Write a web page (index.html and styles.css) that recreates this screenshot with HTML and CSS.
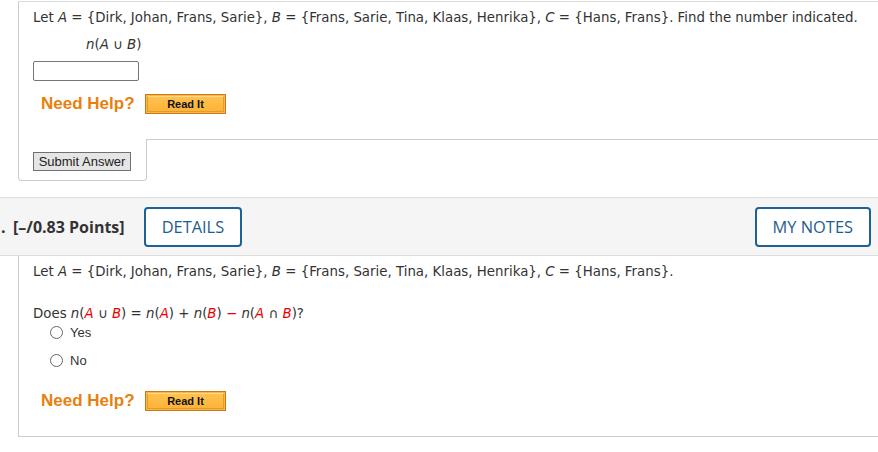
FILE: index.html
```html
<!DOCTYPE html>
<html>
<head>
<meta charset="utf-8">
<link rel="stylesheet" href="styles.css">
</head>
<body>
<div class="q1">
  <div class="card-body">
    <p class="stem">Let <i>A</i> = {Dirk, Johan, Frans, Sarie}, <i>B</i> = {Frans, Sarie, Tina, Klaas, Henrika}, <i>C</i> = {Hans, Frans}. Find the number indicated.</p>
    <p class="expr"><i>n</i>(<i>A</i> &cup; <i>B</i>)</p>
    <div class="answer"></div>
    <div class="help">
      <span class="need">Need Help?</span>
      <span class="readit"><span class="readit-in">Read It</span></span>
    </div>
  </div>
  <div class="submit-row">
    <div class="tab"><span class="submit">Submit Answer</span></div>
    <div class="tab-rest"></div>
  </div>
</div>

<div class="qhead">
  <span class="qnum">.</span>
  <span class="points">[&ndash;/0.83 Points]</span>
  <span class="btn">DETAILS</span>
  <span class="spacer"></span>
  <span class="btn notes">MY NOTES</span>
</div>

<div class="q2">
  <p class="stem">Let <i>A</i> = {Dirk, Johan, Frans, Sarie}, <i>B</i> = {Frans, Sarie, Tina, Klaas, Henrika}, <i>C</i> = {Hans, Frans}.</p>
  <p class="does">Does <i>n</i>(<i class="r">A</i> &cup; <i class="r">B</i>) = <i>n</i>(<i class="r">A</i>) + <i>n</i>(<i class="r">B</i>) <span class="r">&minus;</span> <i>n</i>(<i class="r">A</i> &cap; <i class="r">B</i>)?</p>
  <div class="opts">
    <div class="opt"><span class="radio"></span><span class="lbl">Yes</span></div>
    <div class="opt"><span class="radio"></span><span class="lbl">No</span></div>
  </div>
  <div class="help help2">
    <span class="need">Need Help?</span>
    <span class="readit"><span class="readit-in">Read It</span></span>
  </div>
</div>
</body>
</html>
```
FILE: styles.css
```css
html, body {
  margin: 0;
  padding: 0;
  background: #fff;
  overflow: hidden;
  width: 878px;
  height: 452px;
}
body {
  font-family: "DejaVu Sans", Verdana, sans-serif;
  font-size: 13.35px;
  color: #333;
}
p { margin: 0; }
i { font-style: italic; }
.r { color: #e00; }

.q1 {
  margin-top: 1px;
  margin-left: 18px;
}
.card-body {
  border-top: 1px solid #ddd;
  border-left: 1px solid #ccc;
  height: 138px;
  box-sizing: border-box;
  padding: 8px 0 0 14px;
}
.stem {
  line-height: 16px;
  white-space: nowrap;
}
.expr {
  margin-top: 11px;
  margin-left: 53px;
  line-height: 16px;
}
.answer {
  margin-top: 8px;
  width: 106px;
  height: 20px;
  box-sizing: border-box;
  border: 1px solid #767676;
  border-radius: 2px;
}
.help {
  display: flex;
  align-items: center;
  margin-top: 13px;
  margin-left: 8px;
}
.need {
  font-family: "Liberation Sans", Arial, sans-serif;
  font-weight: bold;
  font-size: 17px;
  color: #e8800d;
  width: 104px;
}
.readit {
  display: inline-block;
  width: 81px;
  height: 20px;
  box-sizing: border-box;
  border: 1px solid #c7791b;
  background: #fdb53c;
  padding: 1px;
}
.readit-in {
  display: block;
  height: 16px;
  border: 1px solid #e49a2d;
  border-top-color: #ffd98c;
  background: linear-gradient(#ffc14f, #fdb43a);
  box-sizing: border-box;
  font-family: "Liberation Sans", Arial, sans-serif;
  font-weight: bold;
  font-size: 11px;
  line-height: 14px;
  text-align: center;
  color: #111;
}
.submit-row {
  display: flex;
}
.tab {
  width: 129px;
  height: 42px;
  box-sizing: border-box;
  border: 1px solid #ccc;
  border-top: none;
  border-radius: 0 0 4px 4px;
  padding: 13px 0 0 14px;
}
.tab-rest {
  flex: 1;
  border-top: 1px solid #ccc;
}
.submit {
  display: inline-block;
  width: 98px;
  height: 19px;
  box-sizing: border-box;
  border: 1px solid #707070;
  background: #e5e5e5;
  font-family: "Liberation Sans", Arial, sans-serif;
  font-size: 13px;
  line-height: 17px;
  text-align: center;
  color: #222;
}

.qhead {
  margin-top: 16px;
  height: 59px;
  box-sizing: border-box;
  border-top: 1px solid #ddd;
  border-bottom: 1px solid #ddd;
  background: #f5f5f5;
  display: flex;
  align-items: center;
  padding: 0 7px 0 0;
  font-family: "Open Sans", sans-serif;
}
.qnum {
  font-weight: bold;
  font-size: 16px;
  color: #333;
  margin-left: 1px;
  width: 12px;
}
.points {
  font-weight: bold;
  font-size: 16px;
  color: #333;
  margin-right: 19px;
}
.btn {
  display: inline-block;
  height: 40px;
  box-sizing: border-box;
  border: 2px solid #1e6193;
  border-radius: 4px;
  background: #fff;
  color: #1e5d8c;
  font-size: 16.4px;
  line-height: 36px;
  padding: 0 16px;
}
.spacer { flex: 1; }

.q2 {
  margin-left: 18px;
  border-left: 1px solid #ccc;
  border-bottom: 1px solid #ccc;
  height: 181px;
  box-sizing: border-box;
  padding: 8px 0 0 14px;
}
.does {
  margin-top: 26px;
  line-height: 16px;
}
.opts {
  margin-top: -4px;
}
.opt {
  display: flex;
  align-items: center;
  margin-left: 17px;
  height: 28px;
}
.radio {
  width: 13px;
  height: 13px;
  box-sizing: border-box;
  border: 1px solid #666;
  border-radius: 50%;
  background: #fff;
  margin-right: 7px;
}
.lbl {
  font-family: "Liberation Sans", Arial, sans-serif;
  font-size: 13px;
  color: #333;
}
.help2 {
  margin-top: 17px;
}
```
